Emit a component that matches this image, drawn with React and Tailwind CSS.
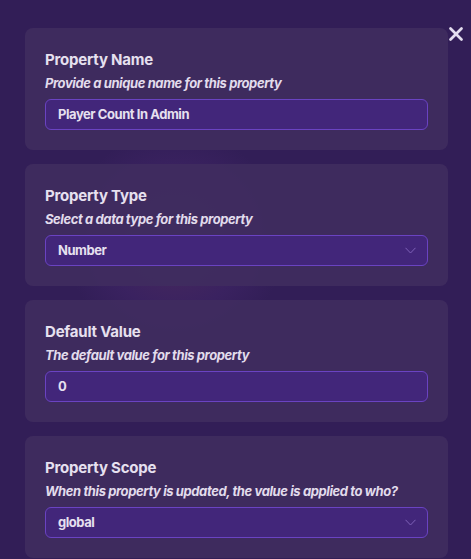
import { X } from "lucide-react";

const fields = [
    {
        title: "Property Name",
        hint: "Provide a unique name for this property",
        value: "Player Count In Admin",
        select: false
    },
    {
        title: "Property Type",
        hint: "Select a data type for this property",
        value: "Number",
        select: true
    },
    {
        title: "Default Value",
        hint: "The default value for this property",
        value: "0",
        select: false
    },
    {
        title: "Property Scope",
        hint: "When this property is updated, the value is applied to who?",
        value: "global",
        select: true
    }
];

const Chevron = () => (
    <svg width="11" height="7" viewBox="0 0 11 7" fill="none" className="shrink-0">
        <path d="M0.5 0.8 L5.5 6 L10.5 0.8" stroke="#7f62b8" strokeWidth="1" />
    </svg>
);

const FieldCard = ({ field }) => (
    <div className="rounded-lg bg-[#3f2c5f]/95 px-5 pt-[22px] pb-5">
        <h2 className="text-[15px] leading-5 font-bold tracking-[-0.2px] text-[#e6e0ef]">{field.title}</h2>
        <p className="mt-[5px] text-[13px] leading-4 font-bold italic tracking-[-0.4px] text-[#e2dcec]">{field.hint}</p>
        <div className="mt-2 flex h-[31px] items-center justify-between rounded-md border border-[#6a43c2] bg-[#42267a] pl-3 pr-[11px]">
            <span className="text-[13px] font-bold tracking-[-0.45px] text-[#e6e0ef]">{field.value}</span>
            {field.select && <Chevron />}
        </div>
    </div>
);

export default function App() {
    return (
        <div
            className="relative h-[559px] w-[471px] overflow-hidden bg-[#321e57] bg-[radial-gradient(circle_at_175px_240px,#4a2a5c_0px,#3a2260_70px,transparent_110px)]"
            style={{ fontFamily: "Inter, 'Noto Sans', sans-serif" }}
        >
            <button className="absolute right-[4px] top-[23px] text-[#e4deef]">
                <X size={22} strokeWidth={3} />
            </button>

            <div className="ml-[25px] flex w-[423px] flex-col gap-[14px] pt-[28px]">
                {fields.map((field) => (
                    <FieldCard key={field.title} field={field} />
                ))}
            </div>
        </div>
    );
}
